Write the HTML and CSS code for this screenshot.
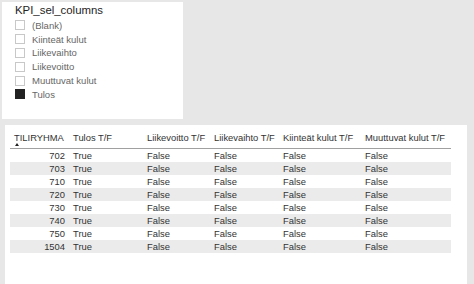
FILE: index.html
```html
<!doctype html>
<html>
<head>
    <meta charset="UTF-8">
    <title>KPI_sel_columns</title>
    <link rel="stylesheet" href="styles.css">
</head>
<body>
    <div class="slicer">
        <div class="slicer-title">KPI_sel_columns</div>
        <div class="slicer-item"><span class="box"></span>(Blank)</div>
        <div class="slicer-item"><span class="box"></span>Kiinteät kulut</div>
        <div class="slicer-item"><span class="box"></span>Liikevaihto</div>
        <div class="slicer-item"><span class="box"></span>Liikevoitto</div>
        <div class="slicer-item"><span class="box"></span>Muuttuvat kulut</div>
        <div class="slicer-item"><span class="box checked"></span>Tulos</div>
    </div>

    <div class="table-panel">
        <table class="grid">
            <colgroup>
                <col class="c1"><col class="c2"><col class="c3"><col class="c4"><col class="c5"><col class="c6">
            </colgroup>
            <thead>
                <tr>
                    <th>TILIRYHMA<div class="sort-up"></div></th>
                    <th>Tulos T/F</th>
                    <th>Liikevoitto T/F</th>
                    <th>Liikevaihto T/F</th>
                    <th>Kiinteät kulut T/F</th>
                    <th>Muuttuvat kulut T/F</th>
                </tr>
            </thead>
            <tbody>
                <tr><td class="num">702</td><td>True</td><td>False</td><td>False</td><td>False</td><td>False</td></tr>
                <tr><td class="num">703</td><td>True</td><td>False</td><td>False</td><td>False</td><td>False</td></tr>
                <tr><td class="num">710</td><td>True</td><td>False</td><td>False</td><td>False</td><td>False</td></tr>
                <tr><td class="num">720</td><td>True</td><td>False</td><td>False</td><td>False</td><td>False</td></tr>
                <tr><td class="num">730</td><td>True</td><td>False</td><td>False</td><td>False</td><td>False</td></tr>
                <tr><td class="num">740</td><td>True</td><td>False</td><td>False</td><td>False</td><td>False</td></tr>
                <tr><td class="num">750</td><td>True</td><td>False</td><td>False</td><td>False</td><td>False</td></tr>
                <tr><td class="num">1504</td><td>True</td><td>False</td><td>False</td><td>False</td><td>False</td></tr>
            </tbody>
        </table>
    </div>
</body>
</html>
```

FILE: styles.css
```css
html, body {
    height: 100%;
}
body {
    font-family: "Liberation Sans", Arial, sans-serif;
    margin: 0;
    padding: 2px 0 0 0;
    box-sizing: border-box;
    background-color: #e7e7e7;
    display: flex;
    flex-direction: column;
    overflow: hidden;
}
.slicer {
    width: 181px;
    height: 117px;
    margin-left: 2px;
    background-color: #fff;
    padding: 0.5px 0 0 13px;
    box-sizing: border-box;
}
.slicer-title {
    font-size: 11.4px;
    line-height: 14px;
    color: #252423;
    margin-bottom: 2px;
}
.slicer-item {
    display: flex;
    align-items: center;
    height: 13.8px;
    font-size: 9.5px;
    color: #666;
}
.box {
    width: 8px;
    height: 8px;
    border: 1px solid #c8c8c8;
    margin-right: 7px;
    flex-shrink: 0;
}
.box.checked {
    background-color: #222;
    border-color: #222;
}
.table-panel {
    flex: 1;
    margin: 6px 7px 0 5px;
    background-color: #fff;
    padding: 0 0 0 5px;
}
.grid {
    border-collapse: collapse;
    table-layout: fixed;
    width: 441px;
    font-size: 9.4px;
    color: #333;
}
.c1 { width: 59px; }
.c2 { width: 74px; }
.c3 { width: 67px; }
.c4 { width: 69px; }
.c5 { width: 82px; }
.c6 { width: 90px; }
.grid th {
    font-weight: normal;
    text-align: left;
    vertical-align: top;
    white-space: nowrap;
    color: #333;
    line-height: 11px;
    padding: 7px 0 0 4px;
    height: 16px;
    border-bottom: 1px solid #a0a0a0;
}
.sort-up {
    width: 0;
    height: 0;
    margin: 0 0 0 1px;
    border-left: 2.5px solid transparent;
    border-right: 2.5px solid transparent;
    border-bottom: 3px solid #222;
}
.grid td {
    line-height: 13px;
    height: 13px;
    padding: 0 0 0 4px;
    white-space: nowrap;
}
.grid td.num {
    text-align: right;
    padding: 0 4px 0 0;
}
.grid tbody tr:nth-child(even) {
    background-color: #ebebeb;
}
```
